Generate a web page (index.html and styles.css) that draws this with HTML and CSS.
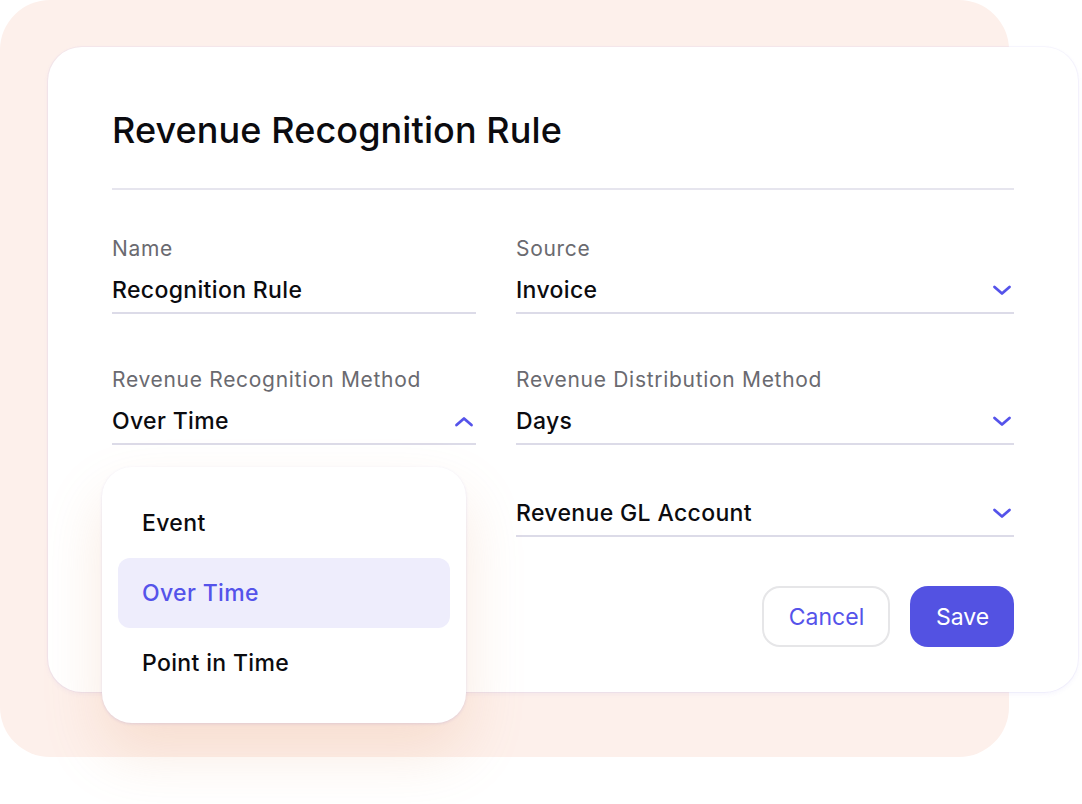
FILE: index.html
```html
<!DOCTYPE html>
<html lang="en">
<head>
<meta charset="utf-8">
<title>Revenue Recognition Rule</title>
<link rel="stylesheet" href="styles.css">
</head>
<body>
<div class="stage">
  <div class="backdrop">
    <section class="card">
      <header class="card-header">
        <h1 class="title">Revenue Recognition Rule</h1>
      </header>
      <div class="form-grid">
        <div class="field">
          <div class="label">Name</div>
          <div class="control"><span class="value">Recognition Rule</span></div>
        </div>
        <div class="field">
          <div class="label">Source</div>
          <div class="control"><span class="value">Invoice</span>
            <svg class="chev" viewBox="0 0 20 11" width="20" height="11"><path d="M2.5 2 L10 8.5 L17.5 2"/></svg>
          </div>
        </div>
        <div class="field field-open">
          <div class="label">Revenue Recognition Method</div>
          <div class="control"><span class="value">Over Time</span>
            <svg class="chev" viewBox="0 0 20 11" width="20" height="11"><path d="M2.5 9 L10 2.5 L17.5 9"/></svg>
          </div>
          <ul class="menu">
            <li class="menu-item">Event</li>
            <li class="menu-item is-selected">Over Time</li>
            <li class="menu-item">Point in Time</li>
          </ul>
        </div>
        <div class="field">
          <div class="label">Revenue Distribution Method</div>
          <div class="control"><span class="value">Days</span>
            <svg class="chev" viewBox="0 0 20 11" width="20" height="11"><path d="M2.5 2 L10 8.5 L17.5 2"/></svg>
          </div>
        </div>
        <div class="field field-empty"></div>
        <div class="field">
          <div class="control"><span class="value">Revenue GL Account</span>
            <svg class="chev" viewBox="0 0 20 11" width="20" height="11"><path d="M2.5 2 L10 8.5 L17.5 2"/></svg>
          </div>
        </div>
      </div>
      <div class="actions">
        <button class="btn btn-ghost">Cancel</button>
        <button class="btn btn-primary">Save</button>
      </div>
    </section>
  </div>
</div>
</body>
</html>
```
FILE: styles.css
```css
* { box-sizing: border-box; }
html, body { margin: 0; padding: 0; background: #ffffff; }
body {
  font-family: Inter, "Noto Sans", "Liberation Sans", sans-serif;
  color: #0b0b0f;
}
.stage {
  width: 1082px;
  height: 804px;
  overflow: hidden;
}
.backdrop {
  width: 1009px;
  height: 757px;
  background: #fdf0eb;
  border-radius: 50px;
  padding: 47px 0 0 48px;
}
.card {
  width: 1030px;
  background: #ffffff;
  border-radius: 34px;
  padding: 61px 64px 45px 64px;
  box-shadow: 0 0 0 1px rgba(120, 100, 220, 0.06), 0 2px 5px rgba(120, 100, 220, 0.07);
}
.card-header {
  padding-bottom: 36px;
  border-bottom: 2px solid #e6e5ee;
}
.title {
  margin: 0;
  font-size: 36px;
  line-height: 44px;
  font-weight: 500;
  letter-spacing: 0.1px;
  color: #0b0b0f;
}
.form-grid {
  display: grid;
  grid-template-columns: 364px 498px;
  column-gap: 40px;
  row-gap: 54px;
  margin-top: 47px;
}
.field { position: relative; }
.label {
  font-size: 21px;
  line-height: 24px;
  color: #6a6a70;
  font-weight: 400;
  letter-spacing: 0.7px;
  margin-bottom: 15px;
}
.control {
  display: flex;
  align-items: center;
  justify-content: space-between;
  padding-bottom: 8px;
  border-bottom: 2px solid #dcdbe8;
}
.value {
  font-size: 23px;
  line-height: 28px;
  font-weight: 500;
  letter-spacing: 0.35px;
  color: #0b0b0f;
}
.chev {
  display: block;
  margin-right: 2px;
  fill: none;
  stroke: #5553ea;
  stroke-width: 2.8;
  stroke-linecap: round;
  stroke-linejoin: round;
}
.menu {
  position: absolute;
  left: -10px;
  top: 99px;
  width: 364px;
  margin: 0;
  padding: 21px 16px 25px 16px;
  list-style: none;
  background: #ffffff;
  border-radius: 30px;
  box-shadow: 0 1px 3px rgba(120, 100, 200, 0.18), 0 30px 60px rgba(225, 150, 100, 0.2);
  z-index: 2;
}
.menu-item {
  height: 70px;
  display: flex;
  align-items: center;
  padding-left: 24px;
  font-size: 23px;
  font-weight: 500;
  letter-spacing: 0.35px;
  color: #0b0b0f;
  border-radius: 12px;
}
.menu-item.is-selected {
  background: #eeedfc;
  color: #5553ea;
}
.actions {
  display: flex;
  justify-content: flex-end;
  gap: 20px;
  margin-top: 49px;
}
.btn {
  height: 61px;
  border-radius: 18px;
  font-family: Inter, "Noto Sans", "Liberation Sans", sans-serif;
  font-size: 23px;
  font-weight: 400;
  padding: 0 0 0 1px;
  cursor: pointer;
}
.btn-ghost {
  background: #ffffff;
  border: 2px solid #e6e6e8;
  color: #5553ea;
  width: 128px;
}
.btn-primary {
  background: #5352e2;
  border: none;
  color: #ffffff;
  width: 104px;
}
```
